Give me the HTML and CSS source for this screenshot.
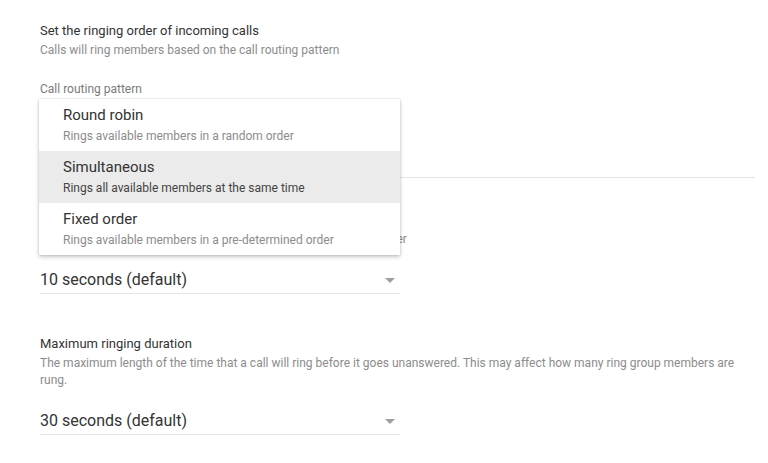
FILE: index.html
```html
<!DOCTYPE html>
<html lang="en">
<head>
<meta charset="utf-8">
<title>Ring group settings</title>
<link rel="stylesheet" href="styles.css">
</head>
<body>
<div class="page">
  <section class="group group-first">
    <h2 class="title">Set the ringing order of incoming calls</h2>
    <p class="desc">Calls will ring members based on the call routing pattern</p>
    <div class="label">Call routing pattern</div>
    <div class="pattern-field">
      <div class="select select-rich">
        <div>
          <div class="opt-title">Simultaneous</div>
          <div class="opt-desc">Rings all available members at the same time</div>
        </div>
        <span class="arrow"></span>
      </div>
      <ul class="menu">
        <li class="menu-item">
          <div class="item-title">Round robin</div>
          <div class="item-desc">Rings available members in a random order</div>
        </li>
        <li class="menu-item is-selected">
          <div class="item-title">Simultaneous</div>
          <div class="item-desc">Rings all available members at the same time</div>
        </li>
        <li class="menu-item">
          <div class="item-title">Fixed order</div>
          <div class="item-desc">Rings available members in a pre-determined order</div>
        </li>
      </ul>
    </div>
  </section>

  <section class="group group-second">
    <h2 class="title">Ringing duration per member</h2>
    <p class="desc">How long to ring each member before moving on to the next member</p>
    <div class="select">
      <span class="value">10 seconds (default)</span>
      <span class="arrow"></span>
    </div>
  </section>

  <section class="group">
    <h2 class="title">Maximum ringing duration</h2>
    <p class="desc">The maximum length of the time that a call will ring before it goes unanswered. This may affect how many ring group members are rung.</p>
    <div class="select">
      <span class="value">30 seconds (default)</span>
      <span class="arrow"></span>
    </div>
  </section>
</div>
</body>
</html>
```

FILE: styles.css
```css
* { box-sizing: border-box; }

html, body {
  margin: 0;
  padding: 0;
  background: #ffffff;
}

body {
  font-family: Roboto, "Liberation Sans", Arial, sans-serif;
  color: #3a3a3a;
  overflow: hidden;
}

.page {
  padding: 21px 13px 0 40px;
}

.group {
  margin-top: 40px;
}

.group-first {
  margin-top: 0;
}

.group-second {
  margin-top: 32px;
}

.title {
  margin: 0;
  font-size: 13px;
  line-height: 20px;
  font-weight: 400;
  color: #333333;
}

.desc {
  margin: 1px 0 0;
  font-size: 12px;
  line-height: 17px;
  color: #8c8c8c;
}

.label {
  margin-top: 22px;
  font-size: 12px;
  line-height: 17px;
  color: #7a7a7a;
}

.pattern-field {
  position: relative;
  height: 80px;
  border-bottom: 1px solid #e4e4e4;
}

.select {
  width: 360px;
  margin-top: 20px;
  display: flex;
  align-items: center;
  justify-content: space-between;
  padding: 0 5px 1px 0;
  border-bottom: 1px solid #e2e2e2;
}

.select-rich {
  margin-top: 0;
  padding-top: 14px;
  border-bottom: none;
}

.value {
  font-size: 16px;
  line-height: 24px;
  color: #333333;
}

.opt-title {
  font-size: 16px;
  line-height: 24px;
  color: #333333;
}

.opt-desc {
  font-size: 12px;
  line-height: 17px;
  color: #8c8c8c;
}

.arrow {
  width: 0;
  height: 0;
  border-left: 5px solid transparent;
  border-right: 5px solid transparent;
  border-top: 5px solid #9e9e9e;
}

.menu {
  position: absolute;
  top: 1px;
  left: -1px;
  width: 361px;
  margin: 0;
  padding: 0;
  list-style: none;
  background: #ffffff;
  box-shadow: 0 2px 4px rgba(0, 0, 0, 0.22), 0 0 2px rgba(0, 0, 0, 0.14);
}

.menu-item {
  height: 52px;
  padding: 6px 24px 0 24px;
}

.menu-item.is-selected {
  background: #ebebeb;
}

.item-title {
  font-size: 15px;
  line-height: 20px;
  color: #333333;
}

.item-desc {
  margin-top: 3px;
  font-size: 12px;
  line-height: 16px;
  color: #8c8c8c;
}

.is-selected .item-desc {
  color: #444444;
}
```
